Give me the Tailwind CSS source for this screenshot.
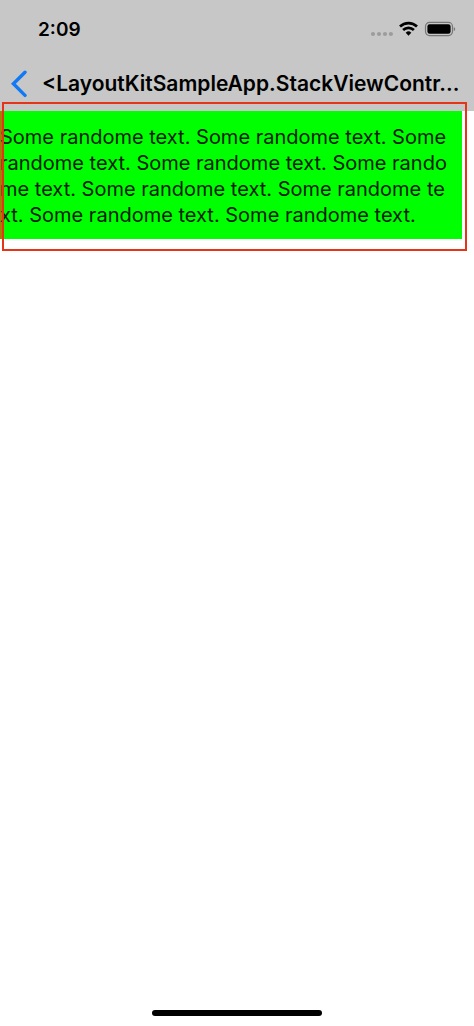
<!DOCTYPE html>
<html lang="en">
<head>
  <meta charset="UTF-8" />
  <meta name="viewport" content="width=device-width, initial-scale=1.0" />
  <title>StackViewController</title>
  <script src="https://cdn.jsdelivr.net/npm/@tailwindcss/browser@4"></script>
</head>
<body class="relative flex flex-col min-h-screen bg-white text-black font-['Inter',sans-serif]">

  <header class="bg-[#c7c7c7]">
    <!-- Status bar -->
    <div class="flex items-center justify-between h-14 pt-0.5 pl-[38px] pr-[18px]">
      <span class="pt-0.5 text-[19px] font-semibold">2:09</span>
      <div class="flex items-center gap-1.5">
        <svg class="w-6 h-4" viewBox="0 0 24 16" fill="#9c9c9c" aria-hidden="true">
          <circle cx="4" cy="13" r="2.100" />
          <circle cx="10" cy="13" r="2.100" />
          <circle cx="16" cy="13" r="2.100" />
          <circle cx="21.900" cy="13" r="2.100" />
        </svg>
        <svg class="w-[19px] h-4" viewBox="0 0 19 16" fill="none" stroke="#000" stroke-width="2.700" aria-hidden="true">
          <path d="M1 5.6a12.3 12.3 0 0 1 17 0" />
          <path d="M4.1 9a7.8 7.8 0 0 1 10.8 0" />
          <path d="M6.7 11.7a4 4 0 0 1 5.6 0L9.500 14.700z" fill="#000" stroke="none" />
        </svg>
        <svg class="w-8 h-4" viewBox="0 0 32 16" aria-hidden="true">
          <rect x="1.500" y="1.400" width="27" height="13.200" rx="4" fill="none" stroke="#777" stroke-width="1.200" />
          <rect x="3.400" y="3.200" width="23.200" height="9.600" rx="2.300" fill="#000" />
          <path d="M29.800 6v4.200c1.900-.8 1.900-3.400 0-4.200z" fill="#777" />
        </svg>
      </div>
    </div>

    <!-- Navigation bar -->
    <nav class="flex items-center h-[55px] pl-2.5 pr-2">
      <button type="button" aria-label="Back" class="w-8 shrink-0">
        <svg class="w-[18px] h-7" viewBox="0 0 18 28" fill="none" stroke="#1079f5" stroke-width="3.400" stroke-linecap="round" stroke-linejoin="miter">
          <path d="M15 2.200L3.400 13.800L15 25.400" />
        </svg>
      </button>
      <h1 class="text-[21px] font-semibold whitespace-nowrap">&lt;LayoutKitSampleApp.StackViewContr...</h1>
    </nav>
  </header>

  <main class="mr-3 pt-[13px] pb-[11px] bg-[#00ff00] border-l-2 border-[#a08000]">
    <p class="-ml-0.5 text-[20px] leading-[26px] whitespace-nowrap text-[#001c00]">Some randome text. Some randome text. Some<br />randome text. Some randome text. Some rando<br />me text. Some randome text. Some randome te<br />xt. Some randome text. Some randome text.</p>
  </main>

  <!-- Highlight frame over the label -->
  <div class="absolute top-[102px] left-0.5 right-[7px] h-[149px] border-2 border-[#e63419]"></div>

  <!-- Home indicator -->
  <div class="w-[170px] h-1.5 mt-auto mb-2.5 mx-auto rounded-full bg-black"></div>
</body>
</html>
